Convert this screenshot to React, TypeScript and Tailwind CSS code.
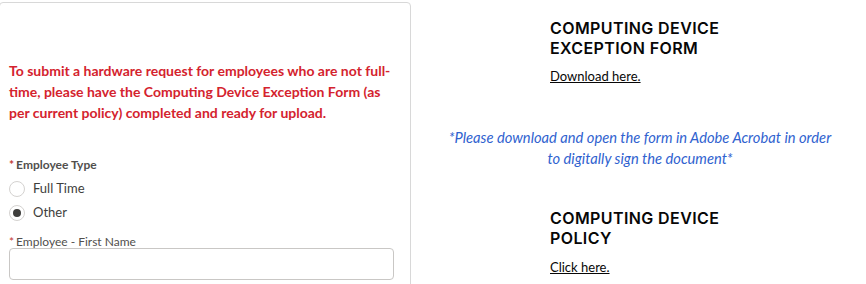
import React from "react";

const lato = { fontFamily: "Lato, 'Open Sans', sans-serif" };

function Radio({ checked, label }: { checked?: boolean; label: string }) {
  return (
    <div className="flex items-center h-[24px]">
      <span className="w-[16px] h-[16px] rounded-full border border-[#d4d2d0] bg-white flex items-center justify-center">
        {checked && <span className="w-[8px] h-[8px] rounded-full bg-[#3e3e3c]" />}
      </span>
      <span className="ml-[8px] text-[13px] text-[#3e3e3c]">{label}</span>
    </div>
  );
}

export default function App() {
  return (
    <div className="w-[866px] h-[284px] overflow-hidden bg-white flex" style={lato}>
      <div className="ml-[-1px] mt-[2px] w-[412px] h-[300px] border border-[#d8d8d8] rounded-[4px] pl-[9px] pr-[16px] pt-[57px] shrink-0">
        <p className="text-[14px] font-bold leading-[21px] text-[#d4232e]">
          To submit a hardware request for employees who are not full-time, please have the Computing Device Exception Form (as per current policy) completed and ready for upload.
        </p>
        <div className="mt-[33px] text-[12px] font-bold leading-[18px]">
          <span className="text-[#c23934] mr-[2px]">*</span>
          <span className="text-[#514f4d]">Employee Type</span>
        </div>
        <div className="mt-[3px] flex flex-col">
          <Radio label="Full Time" />
          <Radio checked label="Other" />
        </div>
        <div className="mt-[10px] text-[12px] leading-[14px] text-[#514f4d]">
          <span className="text-[#c23934] mr-[2px]">*</span>Employee - First Name
        </div>
        <div className="mt-[-1px] w-[385px] h-[32px] border border-[#c9c7c5] rounded-[4px] bg-white" />
      </div>
      <div className="ml-[19px] w-[420px] flex flex-col pt-[18px]">
        <div className="ml-[120px]">
          <h2 className="text-[16px] font-semibold leading-[20px] text-[#080707] uppercase tracking-[0.4px]" style={{ fontFamily: "Inter, 'Open Sans', sans-serif" }}>
            Computing Device<br />Exception Form
          </h2>
          <a className="block mt-[9px] text-[13px] leading-[18px] text-[#080707] underline">Download here.</a>
        </div>
        <p className="mt-[42px] px-[15px] text-center italic text-[14.7px] leading-[21px] text-[#2f62cf]">
          *Please download and open the form in Adobe Acrobat in order to digitally sign the document*
        </p>
        <div className="ml-[120px] mt-[39px]">
          <h2 className="text-[16px] font-semibold leading-[20px] text-[#080707] uppercase tracking-[0.4px]" style={{ fontFamily: "Inter, 'Open Sans', sans-serif" }}>
            Computing Device<br />Policy
          </h2>
          <a className="block mt-[10px] text-[13px] leading-[18px] text-[#080707] underline">Click here.</a>
        </div>
      </div>
    </div>
  );
}
